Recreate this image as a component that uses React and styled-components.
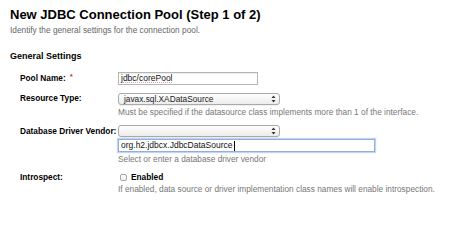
import React from 'react'
import styled, { createGlobalStyle } from 'styled-components'

const GlobalStyle = createGlobalStyle`
  html, body {
    margin: 0;
    padding: 0;
    background: #fff;
  }
  body {
    font-family: "Liberation Sans", Arial, sans-serif;
    color: #000;
  }
`

const Page = styled.div`
  padding: 7px 10px 0 10px;
  width: 474px;
  height: 232px;
  box-sizing: border-box;
  overflow: hidden;
`

const Title = styled.h1`
  margin: 0;
  font-size: 13px;
  line-height: 15px;
  font-weight: bold;
`

const Subtitle = styled.div`
  margin-top: 3px;
  font-size: 8.3px;
  line-height: 10px;
  color: #666;
`

const SectionTitle = styled.h2`
  margin: 16px 0 0 0;
  font-size: 9px;
  line-height: 11px;
  font-weight: bold;
`

const Form = styled.div`
  padding-left: 10px;
  margin-top: 10px;
`

const FieldRow = styled.div`
  display: grid;
  grid-template-columns: 98px 1fr;
  align-items: start;
  margin-top: ${(p) => p.$gap || 0}px;
`

const Label = styled.div`
  font-size: 8.3px;
  line-height: ${(p) => p.$lh || 13}px;
  font-weight: bold;
  white-space: nowrap;
`

const Required = styled.span`
  color: #d0312d;
  font-size: 8px;
  margin-left: 4px;
  position: relative;
  top: -2px;
`

const Value = styled.div`
  display: flex;
  flex-direction: column;
  align-items: flex-start;
`

const TextBox = styled.div`
  box-sizing: border-box;
  width: ${(p) => p.$w}px;
  height: 13px;
  margin-top: ${(p) => p.$mt || 0}px;
  border: 1px solid ${(p) => (p.$focus ? '#8fb0dc' : '#b5b5b5')};
  box-shadow: ${(p) => (p.$focus ? '0 0 1px 1px rgba(120,160,220,0.45)' : 'inset 0 1px 1px rgba(0,0,0,0.08)')};
  background: #fff;
  padding: 0 2px;
  font-size: 8.5px;
  line-height: 11px;
  color: #111;
  display: flex;
  align-items: center;
  white-space: nowrap;
`

const Spell = styled.span`
  text-decoration: underline dotted rgba(220, 60, 60, 0.5);
  text-underline-offset: 1px;
`

const Caret = styled.span`
  display: inline-block;
  width: 1px;
  height: 10px;
  background: #000;
  margin-left: 1px;
`

const SelectBox = styled.div`
  box-sizing: border-box;
  width: ${(p) => p.$w}px;
  height: 12px;
  border: 1px solid #a9a9a9;
  border-radius: 3px;
  background: linear-gradient(#ffffff, #ececec);
  box-shadow: 0 1px 0 rgba(0, 0, 0, 0.06);
  display: flex;
  align-items: center;
  justify-content: space-between;
  padding: 0 3px 0 5px;
  font-size: 8.3px;
  line-height: 10px;
  color: #222;
`

const Help = styled.div`
  margin-top: 2px;
  font-size: 8.3px;
  line-height: 10px;
  color: #777;
  white-space: nowrap;
`

const CheckLine = styled.label`
  display: flex;
  align-items: center;
  height: 10px;
  margin-left: 2px;
  font-size: 8.3px;
  font-weight: bold;
  gap: 4px;
`

const CheckBox = styled.span`
  box-sizing: border-box;
  width: 7px;
  height: 7px;
  border: 1px solid #a5a5a5;
  border-radius: 2px;
  background: linear-gradient(#fff, #f0f0f0);
`

const Arrows = () => (
  <svg width="5" height="8" viewBox="0 0 5 8">
    <path d="M2.5 0.5 L4.5 3 L0.5 3 Z" fill="#333" />
    <path d="M2.5 7.5 L4.5 5 L0.5 5 Z" fill="#333" />
  </svg>
)

const App = () => {
  return (
    <>
      <GlobalStyle />
      <Page>
        <Title>New JDBC Connection Pool (Step 1 of 2)</Title>
        <Subtitle>Identify the general settings for the connection pool.</Subtitle>
        <SectionTitle>General Settings</SectionTitle>
        <Form>
          <FieldRow>
            <Label>
              Pool Name:<Required>*</Required>
            </Label>
            <Value>
              <TextBox $w={140}>
                <Spell>jdbc/corePool</Spell>
              </TextBox>
            </Value>
          </FieldRow>

          <FieldRow $gap={8}>
            <Label $lh={10}>Resource Type:</Label>
            <Value>
              <SelectBox $w={162}>
                <span>javax.sql.XADataSource</span>
                <Arrows />
              </SelectBox>
              <Help>Must be specified if the datasource class implements more than 1 of the interface.</Help>
            </Value>
          </FieldRow>

          <FieldRow $gap={8}>
            <Label $lh={12}>Database Driver Vendor:</Label>
            <Value>
              <SelectBox $w={162}>
                <span />
                <Arrows />
              </SelectBox>
              <TextBox $w={257} $mt={2} $focus>
                org.h2.jdbcx.JdbcDataSource
                <Caret />
              </TextBox>
              <Help>Select or enter a database driver vendor</Help>
            </Value>
          </FieldRow>

          <FieldRow $gap={8}>
            <Label $lh={10}>Introspect:</Label>
            <Value>
              <CheckLine>
                <CheckBox />
                Enabled
              </CheckLine>
              <Help>If enabled, data source or driver implementation class names will enable introspection.</Help>
            </Value>
          </FieldRow>
        </Form>
      </Page>
    </>
  )
}

export default App
